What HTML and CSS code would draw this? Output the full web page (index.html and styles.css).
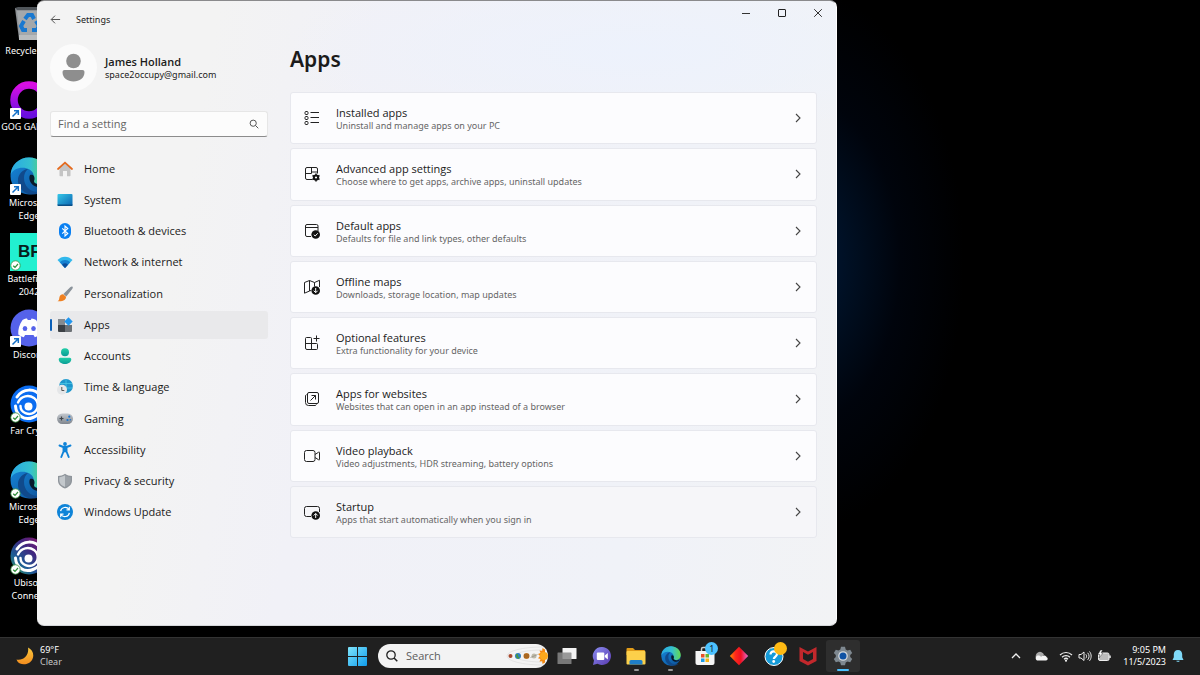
FILE: index.html
```html
<!DOCTYPE html>
<html lang="en">
<head>
<meta charset="utf-8">
<title>Settings</title>
<meta name="viewport" content="width=device-width, initial-scale=1">
<link rel="stylesheet" href="styles.css">
</head>
<body>
<svg class="defs" aria-hidden="true">
  <defs>
    <linearGradient id="gBlue" x1="0" y1="0" x2="1" y2="1"><stop offset="0" stop-color="#35c8e8"/><stop offset="1" stop-color="#0a62b0"/></linearGradient>
    <linearGradient id="gSteel" x1="0" y1="0" x2="0" y2="1"><stop offset="0" stop-color="#c3c8ce"/><stop offset="1" stop-color="#7f858d"/></linearGradient>
    <linearGradient id="gTeal" x1="0" y1="0" x2="0" y2="1"><stop offset="0" stop-color="#22cfa8"/><stop offset="1" stop-color="#0b9c96"/></linearGradient>
    <linearGradient id="gGog" x1="0" y1="0" x2="0" y2="1"><stop offset="0" stop-color="#d90fe4"/><stop offset="1" stop-color="#6a0fe0"/></linearGradient>
    <linearGradient id="gUbi" x1="1" y1="0" x2="0" y2="1"><stop offset="0" stop-color="#a3186c"/><stop offset=".4" stop-color="#41257e"/><stop offset=".7" stop-color="#1d5d96"/><stop offset="1" stop-color="#3aa05a"/></linearGradient>
    <linearGradient id="gEdgeTop" x1="0" y1="0" x2="1" y2="0"><stop offset="0" stop-color="#2aa9e4"/><stop offset=".55" stop-color="#35c1cf"/><stop offset="1" stop-color="#66d84c"/></linearGradient>
    <linearGradient id="gEdgeLow" x1="0" y1="0" x2="1" y2="1"><stop offset="0" stop-color="#1789dc"/><stop offset="1" stop-color="#0c4f96"/></linearGradient>
    <linearGradient id="gWin" x1="0" y1="0" x2="1" y2="1"><stop offset="0" stop-color="#7fe4fb"/><stop offset="1" stop-color="#0f9cec"/></linearGradient>
    <linearGradient id="gMoon" x1="0" y1="0" x2="0" y2="1"><stop offset="0" stop-color="#fbc93e"/><stop offset="1" stop-color="#f28c1e"/></linearGradient>
    <linearGradient id="gChat" x1="0" y1="0" x2="1" y2="1"><stop offset="0" stop-color="#8a8cf0"/><stop offset="1" stop-color="#5a3bb0"/></linearGradient>
    <linearGradient id="gDiamond" x1="0" y1="0" x2="1" y2="0"><stop offset="0" stop-color="#ff8a00"/><stop offset=".3" stop-color="#ff2a1c"/><stop offset=".6" stop-color="#ee1020"/><stop offset="1" stop-color="#e86ad0"/></linearGradient>
    <symbol id="edge" viewBox="0 0 38 38">
      <circle cx="19" cy="19" r="18.5" fill="url(#gEdgeLow)"/>
      <path d="M.6 18C1 8 9 .5 19 .5S37.500 8 37.500 17c0 6-4.500 9.500-9.500 9.500-4 0-6-1.500-5.500-3 2-3 2-8-3-11C13 9 3 11 .6 18Z" fill="url(#gEdgeTop)"/>
      <path d="M14 21c0 8 6 14 14 14 3 0 5-1 6-2-4 4-9 5-13 4.500C14 37 7 30 8 22c.5-5 5-9.500 10-10-2.500 2-4 5-4 9Z" fill="#104a8c"/>
      <path d="M20 18c2-1 5 0 4.500 4.500-1 2-.5 4 3.500 4.800 3 .5 6-.5 8-2-2 4-6 5.500-9.500 4.500C21 28.500 18 22 20 18Z" fill="#071a2b"/>
    </symbol>
    <symbol id="swirl" viewBox="0 0 38 38">
      <g fill="none" stroke="#fff" stroke-linecap="round">
        <path d="M7 12C13 3 25 3 30.500 11S32 29 23 32.500 6 30 5.500 21" stroke-width="3"/>
        <path d="M8 17.500C11 10.500 19 9.500 24 13s5 11 0 14.500-13.500.5-13.500-6.500" stroke-width="2.400"/>
      </g>
      <circle cx="18.500" cy="21.500" r="4" fill="#fff"/>
    </symbol>
    <symbol id="shortcut" viewBox="0 0 11 11">
      <rect width="11" height="11" rx="1" fill="#fff"/>
      <path d="M2.500 8.500 8 3M4 2.700h4.300V7" fill="none" stroke="#1470c8" stroke-width="1.500"/>
    </symbol>
    <symbol id="synced" viewBox="0 0 11 11">
      <circle cx="5.500" cy="5.500" r="4.700" fill="#fff" stroke="#2f8f3a" stroke-width=".8"/>
      <path d="M3.200 5.700 5 7.300 8 4" fill="none" stroke="#2f8f3a" stroke-width="1.200"/>
    </symbol>
    <symbol id="chev" viewBox="0 0 10 10"><path d="m3 1 4 4-4 4" fill="none" stroke="#444" stroke-width="1.100"/></symbol>
  </defs>
</svg>

<main class="desktop">
  <ul class="shortcuts">
    <li class="shortcut">
      <span class="shortcut-art"><svg viewBox="0 0 38 38"><path d="M5 3h30l-4 31H9Z" fill="#8f9397"/><path d="m5 3 3-1h26l3 1-2 2H7Z" fill="#50555a"/><path d="M7 6h26l-3 25H10Z" fill="#a4a8ab"/><path d="M9 30h21v5H9Z" fill="#b9bcbe"/><g fill="none" stroke="#1878d0" stroke-width="4"><path d="m15 14 3-4h4l2 4"/><path d="m14 16-3 5 2 4h4"/><path d="m26 16 3 5-2 4h-5"/></g></svg></span>
      <span>Recycle Bin</span></li>
    <li class="shortcut">
      <span class="shortcut-art"><svg viewBox="0 0 38 38"><circle cx="19" cy="19" r="15" fill="none" stroke="url(#gGog)" stroke-width="7.500"/></svg><svg class="mark"><use href="#shortcut"/></svg></span>
      <span>GOG GALAXY</span></li>
    <li class="shortcut">
      <span class="shortcut-art"><svg><use href="#edge"/></svg><svg class="mark"><use href="#shortcut"/></svg></span>
      <span>Microsoft Edge</span></li>
    <li class="shortcut">
      <span class="shortcut-art art-bf">BF:<svg class="mark"><use href="#synced"/></svg></span>
      <span>Battlefield 2042</span></li>
    <li class="shortcut">
      <span class="shortcut-art"><svg viewBox="0 0 38 38"><circle cx="19" cy="19" r="18.500" fill="#5562ea"/><path d="M12.500 11c2-1 3.500-1.300 4.500-1.400l.8 1.500h3l.8-1.500c1.500.1 3 .5 4.500 1.400 3 4.500 4.500 9.500 4.200 14.500-2 1.500-4 2.400-5.500 2.700l-1.300-2.200h-8.400l-1.300 2.200c-2-.4-3.800-1.300-5.500-2.700-.4-5 1-10 4.200-14.500Z" fill="#fff"/><ellipse cx="15" cy="19.500" rx="2.300" ry="2.500" fill="#5562ea"/><ellipse cx="23.500" cy="19.500" rx="2.300" ry="2.500" fill="#5562ea"/></svg><svg class="mark"><use href="#shortcut"/></svg></span>
      <span>Discord</span></li>
    <li class="shortcut">
      <span class="shortcut-art"><svg viewBox="0 0 38 38"><circle cx="19" cy="19" r="18.500" fill="#0a6cf0"/><use href="#swirl"/></svg><svg class="mark"><use href="#synced"/></svg></span>
      <span>Far Cry 6</span></li>
    <li class="shortcut">
      <span class="shortcut-art"><svg><use href="#edge"/></svg><svg class="mark"><use href="#synced"/></svg></span>
      <span>Microsoft Edge</span></li>
    <li class="shortcut">
      <span class="shortcut-art"><svg viewBox="0 0 38 38"><circle cx="19" cy="19" r="18.500" fill="url(#gUbi)"/><use href="#swirl"/></svg><svg class="mark"><use href="#synced"/></svg></span>
      <span>Ubisoft Connect</span></li>
  </ul>

  <section class="window" aria-label="Settings">
    <header class="titlebar">
      <button class="back" aria-label="Back"><svg viewBox="0 0 12 12"><path d="M11 6H1.500M5.500 1.800 1.300 6l4.200 4.200" fill="none" stroke="#444"/></svg></button>
      <span class="title">Settings</span>
      <div class="controls">
        <button aria-label="Minimize"><svg viewBox="0 0 10 10"><path d="M1 5.500h8" stroke="#333" fill="none"/></svg></button>
        <button aria-label="Maximize"><svg viewBox="0 0 10 10"><rect x="1.500" y="1.500" width="7" height="7" rx=".5" stroke="#222" fill="none"/></svg></button>
        <button aria-label="Close"><svg viewBox="0 0 10 10"><path d="m1.200 1.200 7.600 7.600m0-7.600L1.200 8.800" stroke="#333" fill="none"/></svg></button>
      </div>
    </header>
    <div class="panes">
      <aside class="sidebar">
        <div class="profile">
          <svg class="avatar" viewBox="0 0 47 47"><circle cx="23.500" cy="23.500" r="23.500" fill="#fbfbfb"/><circle cx="23.500" cy="17" r="7.300" fill="#8e8e8e"/><path d="M14.500 26h18a2 2 0 0 1 2 2c0 6-5 9.500-11 9.500s-11-3.500-11-9.500a2 2 0 0 1 2-2Z" fill="#8e8e8e"/></svg>
          <div>
            <div class="name">James Holland</div>
            <div class="email">space2occupy@gmail.com</div>
          </div>
        </div>
        <label class="find">
          <input type="text" placeholder="Find a setting" aria-label="Find a setting">
          <svg viewBox="0 0 10 10"><circle cx="4.200" cy="4.200" r="3.100" fill="none" stroke="#555"/><path d="m6.500 6.500 2.800 2.800" stroke="#555"/></svg>
        </label>
        <nav class="nav">
          <a href="#"><svg viewBox="0 0 16 16"><path d="M2.500 7 8 2l5.500 5v7.500a.8.800 0 0 1-.8.800H10V10H6v5.300H3.300a.8.800 0 0 1-.8-.8Z" fill="#c4c4c4"/><path d="M1 8 8 1.600 15 8" fill="none" stroke="#e46a1e" stroke-width="1.700" stroke-linecap="round"/></svg>Home</a>
          <a href="#"><svg viewBox="0 0 16 16"><rect x=".5" y="2" width="15" height="12" rx="1" fill="url(#gBlue)"/><path d="M.5 12.500h15V13a1 1 0 0 1-1 1h-13a1 1 0 0 1-1-1Z" fill="#0b4f86"/></svg>System</a>
          <a href="#"><svg viewBox="0 0 16 16"><rect x="2" y="0" width="12" height="16" rx="6" fill="#0a80f2"/><path d="m5.200 5.300 5.600 5.200L8 13V3l2.800 2.500-5.600 5.200" fill="none" stroke="#fff" stroke-width="1.100"/></svg>Bluetooth &amp; devices</a>
          <a href="#"><svg viewBox="0 0 16 16"><path d="M.5 6C4.500 1.500 11.500 1.500 15.500 6L8 14Z" fill="#31b8ec"/><path d="M2.800 8.300c3-3.200 7.400-3.200 10.400 0L8 14Z" fill="#1580d0"/><path d="M5 10.700c2-1.900 4-1.900 6 0L8 14Z" fill="#0b4c9a"/></svg>Network &amp; internet</a>
          <a href="#"><svg viewBox="0 0 16 16"><path d="M15.500.7c.6.600.2 1.500-.3 2.300L9.300 10.600 6.400 8.100 13.200 1.300c.8-.8 1.700-1.200 2.300-.6Z" fill="#8a929a"/><path d="M6.200 8.300 9 10.800c.3 2.500-2.500 5-8.500 4.500 2-1 1.500-2.500 2-4.300.5-2 2.300-3 3.700-2.700Z" fill="#ef8122"/></svg>Personalization</a>
          <a href="#" class="active" aria-current="page"><svg viewBox="0 0 16 16"><path d="M1 2h7v6H1Z" fill="#858a8f"/><path d="M1 8h7v7H2a1 1 0 0 1-1-1Z" fill="#3c4045"/><path d="M8 8h7v6a1 1 0 0 1-1 1H8Z" fill="#6c7176"/><path d="m11.500.3 4.200 4.200-4.200 4.200-4.200-4.200Z" fill="#2196ee"/></svg>Apps</a>
          <a href="#"><svg viewBox="0 0 16 16"><circle cx="8" cy="4.200" r="4" fill="url(#gTeal)"/><path d="M3.200 9.800h9.600A1.500 1.500 0 0 1 14.300 11.300C14.300 14.500 11 16 8 16S1.700 14.500 1.700 11.300A1.500 1.500 0 0 1 3.200 9.800Z" fill="url(#gTeal)"/></svg>Accounts</a>
          <a href="#"><svg viewBox="0 0 16 16"><circle cx="9" cy="7" r="6.900" fill="#1e96cc"/><path d="M3 4.500h12M9 .3v9M3 9h12.500" stroke="#4fd0e8" stroke-width=".7" fill="none"/><circle cx="5" cy="10.700" r="5" fill="#e4e6e8"/><path d="M4.800 8v3.500h2.500" fill="none" stroke="#555"/></svg>Time &amp; language</a>
          <a href="#"><svg viewBox="0 0 16 16"><rect x="0" y="2.500" width="16" height="10.500" rx="5.200" fill="url(#gSteel)"/><path d="M4.500 5.500v4M2.500 7.500h4" stroke="#40464c" stroke-width="1.200"/><g fill="#1673d0"><circle cx="12.300" cy="5.700" r="1.100"/><circle cx="10.500" cy="9" r="1.100"/><circle cx="13.300" cy="8.700" r=".8"/></g></svg>Gaming</a>
          <a href="#"><svg viewBox="0 0 16 16"><circle cx="8" cy="2" r="1.900" fill="#0f83d8"/><path d="M2.500 3.500 6.300 5h3.400l3.800-1.500M8 5v4.500M6.500 5.500v4L4.300 15M9.500 5.500v4L11.700 15" fill="none" stroke="#0f83d8" stroke-width="1.900" stroke-linecap="round" stroke-linejoin="round"/></svg>Accessibility</a>
          <a href="#"><svg viewBox="0 0 16 16"><path d="M8 .8c2 1.700 4.500 2.100 7 2.200v4.500c0 4-3 6.500-7 8-4-1.500-7-4-7-8V3c2.500-.1 5-.5 7-2.200Z" fill="#8f959b"/><path d="M8 2.300c1.800 1.300 3.800 1.700 5.700 1.900v3.300c0 3-2.200 5.200-5.700 6.500Z" fill="#9ba1a7"/><path d="M8 2.300C6.200 3.600 4.200 4 2.300 4.200v3.300C2.300 10.500 4.500 12.700 8 14Z" fill="#c3c8cc"/></svg>Privacy &amp; security</a>
          <a href="#"><svg viewBox="0 0 16 16"><circle cx="8" cy="8" r="8" fill="#0f84d8"/><path d="M3.600 7.200A4.600 4.600 0 0 1 12 5.500m.4 3.300A4.600 4.600 0 0 1 4 10.500M12.300 2.800v3H9.500M3.700 13.200v-3h2.800" fill="none" stroke="#fff" stroke-width="1.200"/></svg>Windows Update</a>
        </nav>
      </aside>

      <div class="content">
        <h1>Apps</h1>
        <div class="cards">
          <a class="card" href="#"><svg class="glyph" viewBox="0 0 18 18"><g fill="none" stroke="#222"><rect x="2" y="2.500" width="3" height="3" rx="1"/><rect x="2" y="7.500" width="3" height="3" rx="1"/><rect x="2" y="12.500" width="3" height="3" rx="1"/><path d="M7.500 3.500H16M7.500 8.500H16M7.500 13.500H16"/></g></svg><span class="card-text"><strong>Installed apps</strong><small>Uninstall and manage apps on your PC</small></span><svg class="chev"><use href="#chev"/></svg></a>
          <a class="card" href="#"><svg class="glyph" viewBox="0 0 18 18"><path d="M9.500 14.500H4A1.500 1.500 0 0 1 2.500 13V4A1.500 1.500 0 0 1 4 2.500h9A1.500 1.500 0 0 1 14.500 4v4.500M8.500 2.500v6M2.500 8.500h6M8.500 7h6" fill="none" stroke="#222"/><circle cx="13" cy="12.500" r="3.100" fill="#111"/><path d="M13 8.500v8M9.500 10.500l7 4M9.500 14.500l7-4" stroke="#111" stroke-width="1.500"/><circle cx="13" cy="12.500" r="1.100" fill="#fff"/></svg><span class="card-text"><strong>Advanced app settings</strong><small>Choose where to get apps, archive apps, uninstall updates</small></span><svg class="chev"><use href="#chev"/></svg></a>
          <a class="card" href="#"><svg class="glyph" viewBox="0 0 18 18"><path d="M8 14.500H4A1.500 1.500 0 0 1 2.500 13V4A1.500 1.500 0 0 1 4 2.500h9.500A1.500 1.500 0 0 1 15 4v5M2.500 5.500H15" fill="none" stroke="#222"/><circle cx="12.700" cy="12.500" r="4.300" fill="#111"/><path d="m10.800 12.700 1.400 1.300 2.500-2.700" fill="none" stroke="#fff"/></svg><span class="card-text"><strong>Default apps</strong><small>Defaults for file and link types, other defaults</small></span><svg class="chev"><use href="#chev"/></svg></a>
          <a class="card" href="#"><svg class="glyph" viewBox="0 0 18 18"><path d="M8 12.500 6.500 13 1.500 15.200V4.500l5-2 5 2 5-2.200V9M6.500 2.500V13M11.500 4.500v4" fill="none" stroke="#222"/><circle cx="12.700" cy="12.500" r="4.300" fill="#111"/><path d="M12.700 10v4.500m-2-1.800 2 2 2-2" fill="none" stroke="#fff"/></svg><span class="card-text"><strong>Offline maps</strong><small>Downloads, storage location, map updates</small></span><svg class="chev"><use href="#chev"/></svg></a>
          <a class="card" href="#"><svg class="glyph" viewBox="0 0 18 18"><path d="M8.500 15.500V4.500A1 1 0 0 0 7.500 3.500H3.500a1 1 0 0 0-1 1v9.500a1.500 1.500 0 0 0 1.500 1.500h9.500a1 1 0 0 0 1-1v-4a1 1 0 0 0-1-1h-11M13.500 1.500v6M10.500 4.500h6" fill="none" stroke="#222"/></svg><span class="card-text"><strong>Optional features</strong><small>Extra functionality for your device</small></span><svg class="chev"><use href="#chev"/></svg></a>
          <a class="card" href="#"><svg class="glyph" viewBox="0 0 18 18"><rect x="4.500" y="2.500" width="11" height="11" rx="1.500" fill="none" stroke="#222"/><path d="M3.500 4.500a2 2 0 0 0-1 1.500v6.500a3 3 0 0 0 3 3H12a2 2 0 0 0 1.500-1M7.500 10.500l5-5M8.500 5.500h4v4" fill="none" stroke="#222"/></svg><span class="card-text"><strong>Apps for websites</strong><small>Websites that can open in an app instead of a browser</small></span><svg class="chev"><use href="#chev"/></svg></a>
          <a class="card" href="#"><svg class="glyph" viewBox="0 0 18 18"><rect x="1.500" y="3.500" width="10.500" height="11" rx="2" fill="none" stroke="#222"/><path d="m12 7.500 3.500-2.200a.5.500 0 0 1 1 .3v6.800a.5.500 0 0 1-1 .3L12 10.500" fill="none" stroke="#222"/></svg><span class="card-text"><strong>Video playback</strong><small>Video adjustments, HDR streaming, battery options</small></span><svg class="chev"><use href="#chev"/></svg></a>
          <a class="card card-dim" href="#"><svg class="glyph" viewBox="0 0 18 18"><path d="M8 13.500H3.500a2 2 0 0 1-2-2v-6a2 2 0 0 1 2-2h11a2 2 0 0 1 2 2V9" fill="none" stroke="#222"/><circle cx="12.700" cy="12.500" r="4.300" fill="#111"/><path d="M12.700 15v-4.500m-2 2 2-2 2 2" fill="none" stroke="#fff"/></svg><span class="card-text"><strong>Startup</strong><small>Apps that start automatically when you sign in</small></span><svg class="chev"><use href="#chev"/></svg></a>
        </div>
      </div>
    </div>
  </section>
</main>

<footer class="taskbar">
  <button class="weather">
    <svg viewBox="0 0 18 18"><path d="M12 .5c4.500 2 6.500 7 4.500 11.500s-8 6.500-12.500 4.500C2 15.500 1 14 .5 12.500 7 14 13.500 8 12 .5Z" fill="url(#gMoon)"/></svg>
    <span>69°F<br><span class="muted">Clear</span></span>
  </button>
  <div class="dock">
    <button class="start" aria-label="Start"><svg viewBox="0 0 19 19" fill="url(#gWin)"><path d="M0 1a1 1 0 0 1 1-1h8v9H0ZM10 0h8a1 1 0 0 1 1 1v8h-9ZM0 10h9v9H1a1 1 0 0 1-1-1ZM10 10h9v8a1 1 0 0 1-1 1h-8Z"/></svg></button>
    <label class="search">
      <svg class="search-icon" viewBox="0 0 12 12"><circle cx="5" cy="5" r="4.200" fill="none" stroke="#222" stroke-width="1.300"/><path d="m8 8 3.300 3.300" stroke="#222" stroke-width="1.500"/></svg>
      <input type="text" placeholder="Search" aria-label="Search">
      <svg class="search-art" viewBox="0 0 42 24"><g fill="none" stroke="#d4d4d4" stroke-width=".5"><ellipse cx="36" cy="12" rx="35" ry="9"/><ellipse cx="36" cy="12" rx="27" ry="6"/></g><circle cx="4.500" cy="12" r="2" fill="#a8482c"/><circle cx="12" cy="12" r="3" fill="#2f7fc0"/><path d="M10 10.500c1.500-1 2.500 0 2 1.200s1.500 1 1.500 2.300-2.500.5-3-.5Z" fill="#4a9a3a"/><circle cx="20.500" cy="12" r="3" fill="#c07828"/><path d="M18 11h5M18 13h5" stroke="#854f18" stroke-width=".8"/><circle cx="28" cy="12" r="2.500" fill="#bdb9a9"/><path d="m24.500 13.500 7-3" stroke="#8f8b80" stroke-width=".7"/><path d="M39 5.500 36.500 4l-.3 2.800-2.700-.3 1 2.500-2.500 1 2 2-2 2.200 2.500.8-1 2.500 2.700-.3.300 2.800L39 18.500Z" fill="#f58a12"/><circle cx="38" cy="12" r="4" fill="#fba81c"/></svg>
    </label>
    <div class="apps">
      <button aria-label="Task view"><svg viewBox="0 0 20 20"><rect x="5.500" y="2" width="14" height="11" rx=".5" fill="#f3f3f3"/><rect x=".5" y="6.500" width="14" height="11.500" rx=".5" fill="#888" fill-opacity=".85"/></svg></button>
      <button aria-label="Chat"><svg viewBox="0 0 20 20"><path d="M10 1a9 9 0 1 1-4.500 16.800L1 19l1-4.500A9 9 0 0 1 10 1Z" fill="url(#gChat)"/><rect x="4.800" y="6.500" width="7.500" height="7.500" rx="1" fill="#fff"/><path d="m12.800 9.500 3-2.500v6.500l-3-2.500Z" fill="#fff"/></svg></button>
      <button class="running" aria-label="File Explorer"><svg viewBox="0 0 20 20"><path d="M.5 3a1 1 0 0 1 1-1h5.500l2 2H18a1 1 0 0 1 1 1v4H.5Z" fill="#e09b18"/><rect x=".5" y="5" width="19" height="13.500" rx="1" fill="#fcd04a"/><path d="M3.500 18.500v-3a1.500 1.500 0 0 1 1.500-1.500h10a1.500 1.500 0 0 1 1.500 1.500v3Z" fill="#1f7fc8"/></svg></button>
      <button class="running" aria-label="Microsoft Edge"><svg><use href="#edge"/></svg></button>
      <button aria-label="Microsoft Store"><svg viewBox="0 0 20 20"><path d="M6.500 5V3a1.500 1.500 0 0 1 1.500-1.500h4A1.500 1.500 0 0 1 13.500 3v2" fill="none" stroke="#ccc" stroke-width="1.500"/><path d="M.5 5h19v12a2 2 0 0 1-2 2h-15a2 2 0 0 1-2-2Z" fill="#f5f5f5"/><path d="M6 8h3.500v3.500H6Z" fill="#e8502a"/><path d="M10.500 8H14v3.500h-3.500Z" fill="#6db52c"/><path d="M6 12.500h3.500V16H6Z" fill="#1c9be6"/><path d="M10.500 12.500H14V16h-3.500Z" fill="#f9b416"/></svg><span class="badge">1</span></button>
      <button aria-label="Media"><svg viewBox="0 0 20 20"><path d="m10 .8 9.200 9.200-9.200 9.200L.8 10Z" fill="url(#gDiamond)"/></svg></button>
      <button aria-label="Get Help"><svg viewBox="0 0 20 20"><circle cx="10" cy="10.500" r="9" fill="#159bd8" stroke="#fff" stroke-width="1"/><path d="M6.500 8.500C6.500 4.500 13 4.500 13 8c0 2.500-3 2.500-3.200 5" fill="none" stroke="#fff" stroke-width="2.200"/><circle cx="9.700" cy="15.500" r="1.400" fill="#fff"/></svg><span class="badge badge-gold"></span></button>
      <button aria-label="McAfee"><svg viewBox="0 0 20 20"><path d="M1.500 1 10 5.500 18.500 1v14L10 19.500 1.500 15Zm3.500 5v7l5 2.800 5-2.800V6l-5 2.700Z" fill="#c2282c" fill-rule="evenodd"/></svg></button>
      <button class="current" aria-label="Settings"><svg viewBox="0 0 20 20"><path d="M8 .8h4l.7 2.700 1.800 1 2.700-.8 2 3.400-2 2v1.800l2 2-2 3.400-2.700-.8-1.800 1-.7 2.700H8l-.7-2.700-1.800-1-2.700.8-2-3.400 2-2V9.100l-2-2 2-3.400 2.700.8 1.800-1Z" fill="#7e8890"/><circle cx="10" cy="10" r="4.800" fill="#d6dade"/><circle cx="10" cy="10" r="3.500" fill="#0f52a4"/></svg></button>
    </div>
  </div>
  <div class="tray">
    <button aria-label="Show hidden icons"><svg viewBox="0 0 14 14"><path d="m3 9 4-4 4 4" fill="none" stroke="#eee" stroke-width="1.300"/></svg></button>
    <button class="cloud" aria-label="OneDrive"><svg viewBox="0 0 14 14"><path d="M2 9a4.200 4.200 0 0 1 8-3.500L6 9Z" fill="#a9a9a9"/><path d="M3 11.500a2.800 2.800 0 0 1 .5-5c1.500-.3 2.500.3 3.500 1.200C8.500 6 12 6 12.700 8.300c1.500.5 1.300 3.200-.7 3.200Z" fill="#f5f5f5"/></svg></button>
    <button class="status" aria-label="Network, sound and battery">
      <svg viewBox="0 0 14 14"><g fill="none" stroke="#eee" stroke-width="1.200"><path d="M1 6a8.500 8.500 0 0 1 12 0M3 8.200a5.700 5.700 0 0 1 8 0M5 10.200a2.900 2.900 0 0 1 4 0"/></g><circle cx="7" cy="11.700" r="1.100" fill="#eee"/></svg>
      <svg viewBox="0 0 14 14"><path d="M1 5.500h2L6 3v8.500L3 9H1Z" fill="none" stroke="#eee"/><path d="M7.800 5.300c1 1 1 3 0 4M9.700 3.800c1.800 2 1.800 5 0 7M11.500 2.500c2.200 2.700 2.200 6.500 0 9.300" fill="none" stroke="#eee"/></svg>
      <svg viewBox="0 0 14 14"><rect x="1.500" y="4" width="10.500" height="7.500" rx="1.500" fill="#bbb" stroke="#eee"/><path d="M13 6.500v2.500" stroke="#eee" stroke-width="1.500"/><path d="M3.500 1 1 5.500h2L2 9l4-5H4L5.500 1Z" fill="#fff" stroke="#222" stroke-width=".4"/></svg>
    </button>
    <button class="clock">9:05 PM<br>11/5/2023</button>
    <button class="bell" aria-label="Notifications"><svg viewBox="0 0 12 14"><path d="M6 1c2.700 0 4.200 2 4.200 4.300v3L11.500 11H.5l1.300-2.700v-3C1.800 3 3.300 1 6 1ZM4.300 11.700h3.400c-.3 1.600-3.100 1.600-3.400 0Z" fill="#7fd9f8"/></svg></button>
  </div>
</footer>
</body>
</html>
```
FILE: styles.css
```css
* { box-sizing: border-box; }

body {
  margin: 0;
  min-height: 100vh;
  display: flex;
  flex-direction: column;
  background: #000;
  color: #1b1b1b;
  font-family: "Open Sans", "Noto Sans", sans-serif;
  font-size: 11px;
  line-height: 14px;
}

button, input { font: inherit; color: inherit; border: 0; background: none; padding: 0; }
a { color: inherit; text-decoration: none; }
ul { list-style: none; margin: 0; padding: 0; }
svg { display: block; flex: none; }
.defs { position: absolute; width: 0; height: 0; }

/* Desktop */
.desktop {
  flex: 1;
  display: grid;
  background: radial-gradient(ellipse 160px 270px at 67% 41%, #001838 0%, #000f22 30%, #00040c 60%, #000 100%), #000;
}

.shortcuts {
  grid-area: 1 / 1;
  width: 58px;
  padding-top: 5px;
}

.shortcut {
  display: flex;
  flex-direction: column;
  align-items: center;
  gap: 1px;
  height: 76px;
  color: #fff;
  font-family: "Noto Sans", sans-serif;
  font-size: 9px;
  line-height: 13px;
  text-align: center;
}
.shortcut > span:last-child { width: 58px; }
.shortcut:nth-child(2) > span:last-child { white-space: nowrap; }
.shortcut-art { position: relative; width: 38px; height: 38px; }
.shortcut-art svg { width: 38px; height: 38px; }
.shortcut-art .mark { position: absolute; left: 0; bottom: 0; width: 11px; height: 11px; }
.art-bf {
  background: #22f0d0;
  color: #06201c;
  font: bold 17px/38px "Liberation Sans", sans-serif;
  padding-left: 8px;
  text-align: left;
}

/* Window */
.window {
  grid-area: 1 / 1;
  position: relative;
  margin: 0 30.25% 11px 37px;
  display: flex;
  flex-direction: column;
  border-radius: 7px;
  border-top: 1px solid #8a8a8c;
  border-right: 1px solid #fff;
  border-bottom: 1px solid #d5d7da;
  background:
    radial-gradient(ellipse 45% 14% at 75% 8%, #edf2fc 0%, transparent 100%),
    linear-gradient(100deg, #f3f3f3 20%, #f1f1f7 38%, #f0f2f8 75%, #f2f3f5 100%);
}

.titlebar { display: flex; align-items: flex-start; height: 36px; padding-left: 13px; }
.back { display: grid; place-items: center; width: 11px; height: 36px; }
.back svg { width: 11px; height: 11px; }
.title { margin-left: 15px; line-height: 37px; font-family: "Noto Sans", sans-serif; font-size: 9px; }
.controls { display: flex; margin-left: auto; }
.controls button { display: grid; place-items: center; width: 36px; height: 23px; }
.controls svg { width: 10px; height: 10px; }

.panes {
  flex: 1;
  display: grid;
  grid-template-columns: 218px 1fr;
  gap: 22px;
  padding: 7px 19px 20px 13px;
}

.profile { display: flex; align-items: center; gap: 8px; }
.avatar { width: 47px; height: 47px; }
.name { font-weight: 600; line-height: 13px; }
.email { font-family: "Noto Sans", sans-serif; font-size: 9px; line-height: 13px; }

.find {
  display: flex;
  align-items: center;
  margin-top: 20px;
  height: 26px;
  padding: 0 8px 0 7px;
  border: 1px solid #e6e6e6;
  border-bottom-color: #8c8c8c;
  border-radius: 3px;
  background: #fcfcfc;
}
.find input { flex: 1; min-width: 0; outline: 0; }
.find input::placeholder { color: #666; opacity: 1; }
.find svg { width: 10px; height: 10px; }

.nav {
  display: grid;
  grid-auto-rows: 1fr;
  align-items: center;
  min-height: 375px;
  margin-top: 16px;
}
.nav a {
  position: relative;
  display: flex;
  align-items: center;
  gap: 11px;
  height: 28px;
  padding-left: 7px;
  border-radius: 3px;
}
.nav svg { width: 16px; height: 16px; }
.nav .active { background: #e9e9eb; }
.nav .active::before {
  content: "";
  position: absolute;
  left: 0;
  width: 2px;
  height: 12px;
  border-radius: 1px;
  background: #0a5fb8;
}

h1 { margin: 0 0 17px; font-family: "Noto Sans", sans-serif; font-size: 21px; line-height: 31px; font-weight: 600; }

.cards { display: grid; grid-auto-rows: 1fr; gap: 4px; min-height: 446px; }
.card {
  display: flex;
  align-items: center;
  padding: 0 13px 0 12px;
  border: 1px solid #e7e8ee;
  border-radius: 3px;
  background: #fcfcfe;
}
.card-dim { background: #f6f6f9; }
.glyph { width: 18px; height: 18px; }
.card-text { flex: 1; display: flex; flex-direction: column; padding: 2px 0 0 15px; }
.card strong { font-weight: 400; line-height: 14px; }
.card small { font-family: "Noto Sans", sans-serif; font-size: 9px; line-height: 12px; color: #666; }
.chev { width: 10px; height: 10px; }

/* Taskbar */
.taskbar {
  display: grid;
  grid-template-columns: 1fr auto 1fr;
  align-items: center;
  height: 38px;
  padding-bottom: 1px;
  border-top: 1px solid #333;
  background: #202020;
  color: #fff;
  font-family: "Noto Sans", sans-serif;
  font-size: 9px;
  line-height: 12px;
}
.weather { display: flex; align-items: center; gap: 6px; padding-left: 16px; text-align: left; }
.weather svg { width: 18px; height: 18px; }
.muted { color: #c8c8c8; }

.dock { display: flex; align-items: center; }
.start { display: grid; place-items: center; width: 34px; height: 36px; }
.start svg { width: 19px; height: 19px; }
.search {
  display: flex;
  align-items: center;
  width: 170px;
  height: 24px;
  margin: 0 2px 0 4px;
  padding-left: 8px;
  border-radius: 12px;
  background: #f3f3f3;
  overflow: hidden;
}
.search-icon { width: 12px; height: 12px; }
.search input { flex: 1; min-width: 0; margin-left: 8px; outline: 0; font-family: "Open Sans", sans-serif; font-size: 11px; }
.search input::placeholder { color: #5c5c5c; opacity: 1; }
.search-art { width: 42px; height: 24px; }

.apps { display: grid; grid-template-columns: repeat(9, 1fr); width: 310px; }
.apps button { position: relative; display: grid; place-items: center; height: 32px; }
.apps svg { width: 20px; height: 20px; }
.running::after, .current::after {
  content: "";
  position: absolute;
  bottom: 1px;
  width: 5px;
  height: 2px;
  border-radius: 1px;
  background: #9a9a9a;
}
.apps .current { background: #2e2e2e; border-radius: 3px; }
.current::after { width: 12px; background: #4cc2ff; }
.badge {
  position: absolute;
  top: 2px;
  right: 4px;
  width: 13px;
  height: 13px;
  border-radius: 50%;
  background: #4cc2ff;
  color: #10222e;
  font-size: 9px;
  line-height: 13px;
}
.badge-gold { background: #fdb913; }

.tray { display: flex; align-items: center; justify-content: flex-end; padding-right: 16px; }
.tray svg { width: 14px; height: 14px; }
.cloud { margin-left: 11px; }
.status { display: flex; gap: 5px; margin: 0 12px 0 11px; }
.clock { text-align: right; }
.tray .bell { margin-left: 6px; }
.tray .bell svg { width: 12px; }
```
